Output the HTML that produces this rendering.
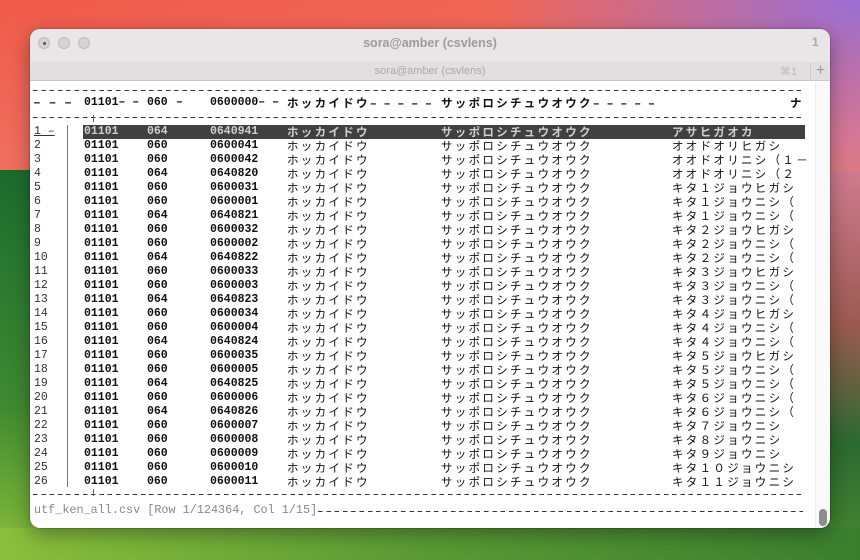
<!DOCTYPE html>
<html><head><meta charset="utf-8"><style>
*{margin:0;padding:0;box-sizing:border-box}
body{width:860px;height:560px;overflow:hidden;position:relative;font-family:"Liberation Sans",sans-serif;
background:
radial-gradient(ellipse 520px 260px at 100% 0%, #9a6fd6 0%, rgba(154,111,214,0) 70%),
linear-gradient(170deg,#f05a4a 0%,#f07060 25%,#e87a80 40%,#d07878 55%,#3a8a3a 62%,#2f7a2f 75%,#7ab03a 100%);}
.bgl{position:absolute;left:0;top:170px;width:40px;height:390px;background:linear-gradient(180deg,#1d6b2e,#3e8a30 60%,#8abf3c)}
.bgr{position:absolute;right:0;top:170px;width:40px;height:390px;background:linear-gradient(180deg,#d07b90,#9a5a50 40%,#2b6a30 70%,#4a8a30)}
.bgb{position:absolute;left:0;top:528px;width:860px;height:32px;background:linear-gradient(90deg,#8abf3c,#5a9a34 50%,#3a7f2e)}
.win{position:absolute;left:30px;top:29px;width:800px;height:499px;background:#fff;border-radius:10px;overflow:hidden;box-shadow:0 6px 20px rgba(0,0,0,.35),0 0 0 .5px rgba(0,0,0,.3)}
.title{position:absolute;left:0;top:0;width:800px;height:33px;background:#e8e6e6}
.tabs{position:absolute;left:0;top:33px;width:800px;height:19px;background:#e1dfdf;border-bottom:1px solid #c8c6c6}
.dot{position:absolute;top:8px;width:12px;height:12px;border-radius:50%;background:#d5d3d3;border:1px solid #bdbbbb}
.ttl{position:absolute;top:7px;left:0;width:800px;text-align:center;font-size:12.5px;font-weight:bold;color:#9d9b9b}
.tab{position:absolute;top:3px;left:0;width:800px;text-align:center;font-size:11px;color:#aaa}
.c{position:absolute;font-family:"Liberation Mono","Noto Sans CJK JP",monospace;font-size:11.5px;line-height:14px;white-space:pre;color:#111}
.k{font-family:"Noto Sans CJK JP",sans-serif;font-size:11.5px;letter-spacing:2.3px}
.b{font-weight:bold}
.dash{position:absolute;left:3px;width:770px;height:1px;background:repeating-linear-gradient(90deg,#333 0 4.5px,transparent 4.5px 8.3px)}
.row{position:absolute;left:0;height:14px;width:800px}
.hl{background:#404040}
.hl .c{color:#cfcfcf;font-weight:bold}
.sb{position:absolute;left:785px;top:53px;width:15px;height:446px;background:#fafafa;border-left:1px solid #ececec}
.th{position:absolute;left:789px;top:480px;width:8px;height:17px;border-radius:4px;background:#8e8e8e}
</style></head><body>
<div class="bgl"></div><div class="bgr"></div><div class="bgb"></div>
<div class="win">
<div class="title">
<div class="dot" style="left:8px"><div style="position:absolute;left:3.5px;top:3.5px;width:3px;height:3px;border-radius:50%;background:#555"></div></div>
<div class="dot" style="left:28px"></div><div class="dot" style="left:48px"></div>
<div class="ttl">sora@amber (csvlens)</div>
<div style="position:absolute;left:782px;top:6px;font-size:12px;color:#aaa;font-weight:bold">1</div>
</div>
<div class="tabs"><div class="tab">sora@amber (csvlens)</div>
<div style="position:absolute;left:750px;top:3px;font-size:11px;color:#bbb">⌘1</div>
<div style="position:absolute;left:780px;top:0;width:20px;height:19px;border-left:1px solid #ccc;color:#999;font-size:16px;text-align:center;line-height:18px">+</div>
</div>
<div class="sb"></div><div class="th"></div>
<div class="dash" style="top:61px"></div>
<div class="dash" style="top:88px"></div>
<div class="dash" style="top:465px"></div>
<div style="position:absolute;left:63px;top:86px;width:1px;height:7px;background:#666"></div>
<div style="position:absolute;left:63px;top:460px;width:1px;height:7px;background:#666"></div>
<div style="position:absolute;left:37px;top:96px;width:1px;height:362px;background:#777"></div>
<div class="row" style="top:67px">
<span class="c b" style="left:3px;color:#222;font-size:13px">– – –</span>
<span class="c b" style="left:54px">01101– –</span>
<span class="c b" style="left:117px">060</span>
<span class="c b" style="left:146px">–</span>
<span class="c b" style="left:180px">0600000– –</span>
<span class="c b" style="left:257px"><span class="k">ホッカイドウ</span>– – – – –</span>
<span class="c b" style="left:411px"><span class="k">サッポロシチュウオウク</span>– – – – –</span>
<span class="c b" style="left:760px"><span class="k">ナ</span></span>
</div>
<div id="rows"></div>
<div class="c" style="left:4px;top:474px;color:#888;font-size:11.8px">utf_ken_all.csv [Row 1/124364, Col 1/15]</div>
<div class="dash" style="left:288px;width:485px;top:482px"></div>
</div>
<script>
var d=[["064","0640941","アサヒガオカ"],["060","0600041","オオドオリヒガシ"],["060","0600042","オオドオリニシ（１－"],["064","0640820","オオドオリニシ（２"],["060","0600031","キタ１ジョウヒガシ"],["060","0600001","キタ１ジョウニシ（"],["064","0640821","キタ１ジョウニシ（"],["060","0600032","キタ２ジョウヒガシ"],["060","0600002","キタ２ジョウニシ（"],["064","0640822","キタ２ジョウニシ（"],["060","0600033","キタ３ジョウヒガシ"],["060","0600003","キタ３ジョウニシ（"],["064","0640823","キタ３ジョウニシ（"],["060","0600034","キタ４ジョウヒガシ"],["060","0600004","キタ４ジョウニシ（"],["064","0640824","キタ４ジョウニシ（"],["060","0600035","キタ５ジョウヒガシ"],["060","0600005","キタ５ジョウニシ（"],["064","0640825","キタ５ジョウニシ（"],["060","0600006","キタ６ジョウニシ（"],["064","0640826","キタ６ジョウニシ（"],["060","0600007","キタ７ジョウニシ"],["060","0600008","キタ８ジョウニシ"],["060","0600009","キタ９ジョウニシ"],["060","0600010","キタ１０ジョウニシ"],["060","0600011","キタ１１ジョウニシ"]];
var h="";
d.forEach(function(r,i){
var top=96+i*14;
h+='<span class="c" style="left:4px;top:'+top+'px;color:#333'+(i==0?';text-decoration:underline':'')+'">'+(i+1)+(i==0?' –':'')+'</span>';
h+='<div class="row'+(i==0?' hl':'')+'" style="top:'+top+'px;left:53px;width:722px">'+
'<span class="c b" style="left:1px">01101</span>'+
'<span class="c b" style="left:64px">'+r[0]+'</span>'+
'<span class="c b" style="left:127px">'+r[1]+'</span>'+
'<span class="c" style="left:204px"><span class="k">ホッカイドウ</span></span>'+
'<span class="c" style="left:358px"><span class="k">サッポロシチュウオウク</span></span>'+
'<span class="c" style="left:589px"><span class="k">'+r[2]+'</span></span></div>';
});
document.getElementById("rows").outerHTML=h;
</script>
</body></html>
